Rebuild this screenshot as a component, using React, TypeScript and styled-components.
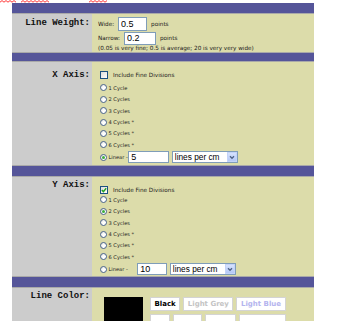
import React from "react";
import styled, { createGlobalStyle } from "styled-components";

const GlobalStyle = createGlobalStyle`
  html, body { margin: 0; padding: 0; background: #ffffff; }
  body { font-family: "DejaVu Sans", Verdana, sans-serif; }
  * { box-sizing: border-box; }
`;

const Page = styled.div`
  display: flex;
  flex-direction: column;
  width: 342px;
`;

const Squiggles = styled.svg`
  display: block;
`;

const Table = styled.div`
  margin-left: 12px;
  width: 302px;
  display: flex;
  flex-direction: column;
  gap: 1px;
  background: #a9a9a9;
`;

const Band = styled.div<{ $h: number }>`
  height: ${(p) => p.$h}px;
  background: #555599;
`;

const Row = styled.div<{ $h: number }>`
  display: grid;
  grid-template-columns: 80px 1fr;
  height: ${(p) => p.$h}px;
`;

const Label = styled.div<{ $pt: number }>`
  background: #cccccc;
  font-family: "Liberation Mono", "Courier New", monospace;
  font-weight: bold;
  font-size: 9px;
  line-height: 10px;
  color: #111111;
  text-align: right;
  padding: ${(p) => p.$pt}px 2px 0 0;
  white-space: pre;
`;

const Cell = styled.div<{ $pt: number; $pl: number }>`
  background: #dcdcaa;
  padding: ${(p) => p.$pt}px 0 0 ${(p) => p.$pl}px;
  display: flex;
  flex-direction: column;
  color: #1a1a1a;
  overflow: hidden;
`;

const FieldLine = styled.div`
  display: flex;
  align-items: center;
  height: 14px;
  gap: 4px;
  font-size: 5.7px;
`;

const Note = styled.div`
  font-size: 5.7px;
  line-height: 7px;
  height: 7px;
  white-space: nowrap;
`;

const TextInput = styled.input<{ $w: number; $h: number }>`
  width: ${(p) => p.$w}px;
  height: ${(p) => p.$h}px;
  border: 1px solid #7f9db9;
  background: #ffffff;
  font-family: "Liberation Sans", Arial, sans-serif;
  font-size: 9px;
  padding: 0 2px;
  margin: 0;
  color: #000000;
  outline: none;
`;

const OptionLine = styled.div<{ $h: number }>`
  display: flex;
  align-items: center;
  height: ${(p) => p.$h}px;
  gap: 1.5px;
  font-size: 5.1px;
  white-space: nowrap;
`;

const CheckLine = styled.div<{ $h: number }>`
  display: flex;
  align-items: center;
  height: ${(p) => p.$h}px;
  gap: 5px;
  font-size: 5.7px;
  white-space: nowrap;
`;

const CheckBox = styled.span`
  width: 8px;
  height: 8px;
  border: 1px solid #1c5180;
  background: linear-gradient(135deg, #dcdcd7, #ffffff);
  display: flex;
  align-items: center;
  justify-content: center;
  flex: none;
`;

const Radio = styled.span<{ $on?: boolean }>`
  width: 7px;
  height: 7px;
  border-radius: 50%;
  border: 1px solid #4a6590;
  background: radial-gradient(circle at 65% 65%, #ffffff 30%, #dcdcd7 100%);
  display: flex;
  align-items: center;
  justify-content: center;
  flex: none;
  &::after {
    content: "";
    display: ${(p) => (p.$on ? "block" : "none")};
    width: 3px;
    height: 3px;
    border-radius: 50%;
    background: #3cae3c;
  }
`;

const OptText = styled.span<{ $mr?: number }>`
  margin-right: ${(p) => p.$mr ?? 0}px;
`;

const FakeSelect = styled.div`
  margin-left: 1px;
  width: 66px;
  height: 12px;
  border: 1px solid #7f9db9;
  background: #ffffff;
  display: flex;
  align-items: center;
  justify-content: space-between;
  font-family: "Liberation Sans", Arial, sans-serif;
  font-size: 8.3px;
  color: #000000;
  padding-left: 2px;
`;

const SelectArrow = styled.span`
  width: 10px;
  height: 10px;
  background: linear-gradient(180deg, #d6e2fd, #b4c8f6);
  border: 1px solid #c3d3f9;
  display: flex;
  align-items: center;
  justify-content: center;
`;

const ColorCell = styled.div`
  background: #dcdcaa;
  padding: 9px 0 0 12px;
  display: flex;
  gap: 7px;
  overflow: hidden;
`;

const Swatch = styled.div`
  width: 39px;
  height: 34px;
  background: #000000;
  flex: none;
`;

const ButtonStack = styled.div`
  display: flex;
  flex-direction: column;
  gap: 3px;
`;

const ButtonRow = styled.div`
  display: flex;
  gap: 3px;
`;

const ColorButton = styled.div<{ $color: string; $w?: number }>`
  height: 14px;
  ${(p) => (p.$w ? `width: ${p.$w}px;` : "")}
  padding: 0 3.5px;
  background: #ffffff;
  border: 1px solid #d4d4d4;
  font-family: "DejaVu Sans", Verdana, sans-serif;
  font-weight: bold;
  font-size: 7px;
  line-height: 12px;
  color: ${(p) => p.$color};
  white-space: nowrap;
`;

function zigzag(x0: number, x1: number) {
  let d = `M${x0} 2.2`;
  let up = true;
  for (let x = x0 + 2; x <= x1; x += 2) {
    d += ` L${x} ${up ? 0.6 : 2.2}`;
    up = !up;
  }
  return d;
}

const Check = () => (
  <svg width="6" height="6" viewBox="0 0 6 6">
    <path d="M0.8 3 L2.4 4.6 L5.2 1.2" stroke="#21a121" strokeWidth="1.4" fill="none" />
  </svg>
);

const Chevron = () => (
  <svg width="6" height="5" viewBox="0 0 6 5">
    <path d="M1 1.3 L3 3.3 L5 1.3" stroke="#4d6185" strokeWidth="1.3" fill="none" />
  </svg>
);

const cycles = ["1 Cycle", "2 Cycles", "3 Cycles", "4 Cycles *", "5 Cycles *", "6 Cycles *"];

type AxisProps = {
  pt: number;
  checkH: number;
  checked: boolean;
  selected: number;
  linearValue: string;
  linearGap: number;
  inputW: number;
};

const AxisOptions = ({ pt, checkH, checked, selected, linearValue, linearGap, inputW }: AxisProps) => (
  <Cell $pt={pt} $pl={8}>
    <CheckLine $h={checkH}>
      <CheckBox>{checked && <Check />}</CheckBox>
      <span>Include Fine Divisions</span>
    </CheckLine>
    {cycles.map((c, i) => (
      <OptionLine key={c} $h={11.45}>
        <Radio $on={selected === i} />
        <OptText>{c}</OptText>
      </OptionLine>
    ))}
    <OptionLine $h={13}>
      <Radio $on={selected === 6} />
      <OptText $mr={linearGap}>Linear -</OptText>
      <TextInput $w={inputW} $h={12} defaultValue={linearValue} />
      <FakeSelect>
        <span>lines per cm</span>
        <SelectArrow>
          <Chevron />
        </SelectArrow>
      </FakeSelect>
    </OptionLine>
  </Cell>
);

export default function App() {
  return (
    <Page>
      <GlobalStyle />
      <Squiggles width="342" height="3" viewBox="0 0 342 3">
        <path d={zigzag(0, 17)} stroke="#ff2020" strokeWidth="0.9" fill="none" />
        <path d={zigzag(21, 50)} stroke="#ff2020" strokeWidth="0.9" fill="none" />
        <path d={zigzag(89, 107)} stroke="#ff2020" strokeWidth="0.9" fill="none" />
      </Squiggles>
      <Table>
        <Band $h={10} />
        <Row $h={38}>
          <Label $pt={3.5}>Line Weight:</Label>
          <Cell $pt={3} $pl={6}>
            <FieldLine>
              <span>Wide:</span>
              <TextInput $w={29} $h={14} defaultValue="0.5" />
              <span>points</span>
            </FieldLine>
            <FieldLine>
              <span>Narrow:</span>
              <TextInput $w={32} $h={13} defaultValue="0.2" />
              <span>points</span>
            </FieldLine>
            <Note>(0.05 is very fine; 0.5 is average; 20 is very very wide)</Note>
          </Cell>
        </Row>
        <Band $h={8} />
        <Row $h={103}>
          <Label $pt={8}>X Axis:</Label>
          <AxisOptions pt={5.5} checkH={14.5} checked={false} selected={6} linearValue="5" linearGap={-1} inputW={41} />
        </Row>
        <Band $h={10} />
        <Row $h={99}>
          <Label $pt={3}>Y Axis:</Label>
          <AxisOptions pt={9} checkH={8} checked={true} selected={1} linearValue="10" linearGap={8} inputW={30} />
        </Row>
        <Band $h={10} />
        <Row $h={50}>
          <Label $pt={3}>Line Color:</Label>
          <ColorCell>
            <Swatch />
            <ButtonStack>
              <ButtonRow>
                <ColorButton $color="#000000">Black</ColorButton>
                <ColorButton $color="#c4c4c4">Light Grey</ColorButton>
                <ColorButton $color="#b4b4ee">Light Blue</ColorButton>
              </ButtonRow>
              <ButtonRow>
                <ColorButton $color="#000000" $w={20} />
                <ColorButton $color="#000000" $w={29} />
                <ColorButton $color="#000000" $w={31} />
                <ColorButton $color="#000000" $w={47} />
              </ButtonRow>
            </ButtonStack>
          </ColorCell>
        </Row>
      </Table>
    </Page>
  );
}
